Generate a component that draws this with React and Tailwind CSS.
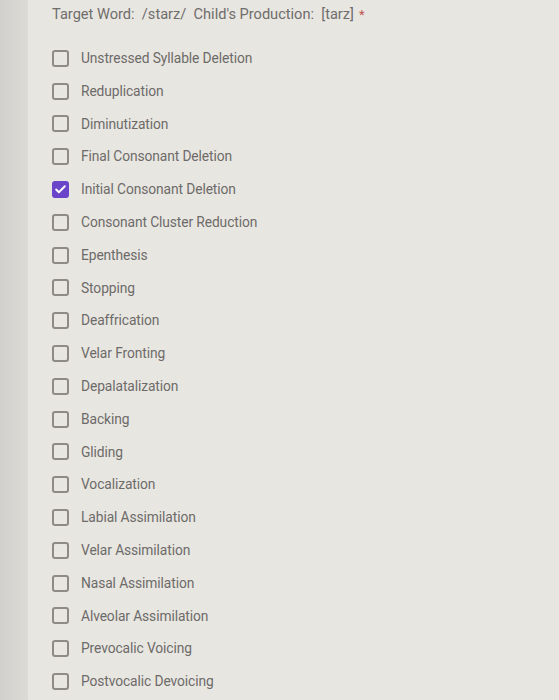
import { Check } from 'lucide-react';

const options = [
  'Unstressed Syllable Deletion',
  'Reduplication',
  'Diminutization',
  'Final Consonant Deletion',
  'Initial Consonant Deletion',
  'Consonant Cluster Reduction',
  'Epenthesis',
  'Stopping',
  'Deaffrication',
  'Velar Fronting',
  'Depalatalization',
  'Backing',
  'Gliding',
  'Vocalization',
  'Labial Assimilation',
  'Velar Assimilation',
  'Nasal Assimilation',
  'Alveolar Assimilation',
  'Prevocalic Voicing',
  'Postvocalic Devoicing',
];

function OptionRow({ label, checked }) {
  return (
    <div className="flex items-center h-[32.8px]">
      {checked ? (
        <span className="w-[17px] h-[17px] rounded-[3px] bg-[#6a45c9] flex items-center justify-center">
          <Check size={13} strokeWidth={3.5} className="text-white" />
        </span>
      ) : (
        <span className="w-[17px] h-[17px] rounded-[3px] border-2 border-[#8d8a88]" />
      )}
      <span className="ml-[12px] text-[13.8px] text-[#6d6b69] tracking-[-0.1px]">{label}</span>
    </div>
  );
}

export default function App() {
  return (
    <div className="w-[559px] h-[700px] flex bg-[#e8e6e1] font-['Roboto',sans-serif] overflow-hidden">
      <div className="w-[28px] shrink-0 bg-gradient-to-r from-[#d2d0cc] to-[#dddbd6]" />
      <div className="flex-1 pl-[24px] pt-[4px]">
        <div className="text-[14.6px] text-[#6f6d6b] h-[22px] flex items-center">
          <span>Target Word:&nbsp; /starz/&nbsp; Child's Production:&nbsp; [tarz]</span>
          <span className="text-[#c2554f] ml-[5px] text-[13px]">*</span>
        </div>
        <div className="mt-[16px]">
          {options.map((o, i) => (
            <OptionRow key={o} label={o} checked={i === 4} />
          ))}
        </div>
      </div>
    </div>
  );
}
